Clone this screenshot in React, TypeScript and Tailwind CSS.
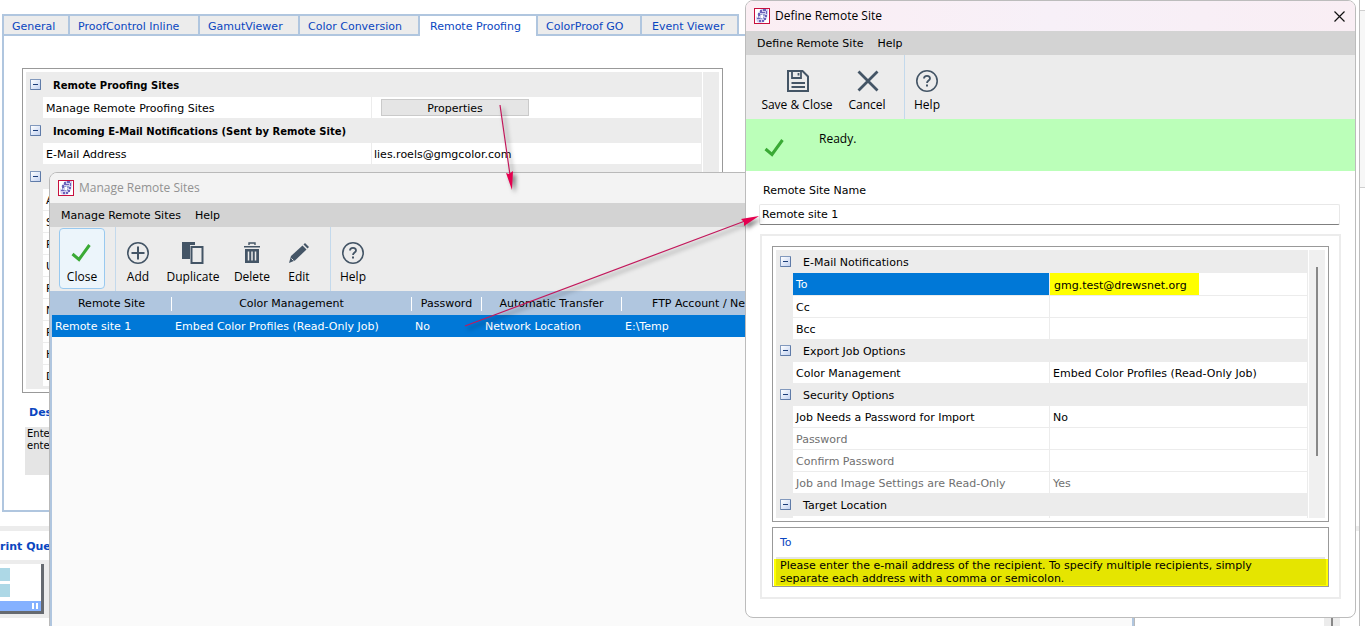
import type { ReactNode } from "react";

const DEJAVU = "font-['DejaVu_Sans',sans-serif]";
const SEGOE = "font-['Open_Sans','Noto_Sans',sans-serif]";

function Logo() {
  return (
    <svg width="16" height="16" viewBox="0 0 16 16" aria-hidden="true" className="shrink-0">
      <rect x="0.5" y="0.5" width="15" height="15" fill="#fff" stroke="#c8103e" />
      <path d="M7 1H14L14 5L13 10L10 14L6 15L3 14L2 10L4 5Z" fill="#cfcdee" />
      <path d="M6 2h2v3H6zM9 1h3v2H9zM12 3h1v3h-1zM4 5h2v3H4zM8 4h3v1H8zM11 7h2v2h-2zM3 10h3v1H3zM5 12h2v2H5zM8 12h2v2H8zM10 10h2v2h-2z" fill="#6a62ba" />
      <path d="M7 7h2v3H7zM3 7h1v2H3zM12 12h2v2h-2z" fill="#fff" />
      <path d="M9 6h2v2H9zM6 10h2v1H6zM9 9h1v2H9zM6 6h2v1H6zM4 8h1v2H4z" fill="#95a2cf" />
    </svg>
  );
}

function Svg({ children }: { children: ReactNode }) {
  return (
    <svg width="24" height="24" viewBox="0 0 24 24" fill="none" stroke="#445566" strokeWidth="2" aria-hidden="true">
      {children}
    </svg>
  );
}

const CheckIcon = () => (
  <Svg>
    <path d="M2.500 13 L9 18.500 L19.500 4" stroke="#3aaa35" strokeWidth="3" />
  </Svg>
);
const AddIcon = () => (
  <Svg>
    <circle cx="12" cy="12" r="10.2" strokeWidth="1.6" />
    <path d="M12 5.5v13M5.5 12h13" />
  </Svg>
);
const DuplicateIcon = () => (
  <Svg>
    <path d="M1 1h13v3H9v14H1z" fill="#445566" stroke="none" />
    <rect x="10.500" y="6" width="11" height="16" fill="#ececec" />
  </Svg>
);
const DeleteIcon = () => (
  <Svg>
    <path d="M9 4V2h6v2" strokeWidth="1.4" />
    <path d="M4 5.8h16" strokeWidth="1.6" />
    <path d="M5 8h14v14H5z" fill="#445566" stroke="none" />
    <path d="M8.500 10.500v9M12 10.500v9M15.500 10.500v9" stroke="#ececec" strokeWidth="1.500" />
  </Svg>
);
const EditIcon = () => (
  <Svg>
    <path d="M2 22 L4 15 L15.500 4.500 L19.500 8.500 L8 19.500 Z" fill="#445566" stroke="none" />
    <path d="M16.500 3.500 L18 2 L22 6 L20.500 7.500 Z" fill="#445566" stroke="none" />
    <path d="M4.500 17.500 L6.500 19.500" stroke="#ececec" strokeWidth="1" />
  </Svg>
);
const HelpIcon = () => (
  <Svg>
    <circle cx="12" cy="12" r="10.2" strokeWidth="1.6" />
    <path d="M9 9.500C9 7.500 10.300 6.800 12 6.800S15 7.700 15 9.400C15 11.500 12 11.500 12 14" strokeWidth="1.800" />
    <path d="M12 15.500v2" />
  </Svg>
);
const SaveIcon = () => (
  <Svg>
    <path d="M3 2h14.500L23 7.500V22H3z" />
    <path d="M7 2v7h9V2M13.500 4v2.500M6.500 14h13.500M6.500 18h13.500" strokeWidth="1.800" />
  </Svg>
);
const CancelIcon = () => (
  <Svg>
    <path d="M3.500 2.500l19 19M22.500 2.500l-19 19" strokeWidth="2.800" />
  </Svg>
);

function ToolButton({ label, width, icon, active }: { label: string; width: string; icon: ReactNode; active?: boolean }) {
  const look = active ? "rounded-sm border border-[#99c9ef] bg-[#ecf5fb]" : "border border-transparent";
  return (
    <button type="button" className={`${SEGOE} ${width} ${look} mt-px flex h-[61px] flex-col items-center gap-1 whitespace-nowrap pt-3 text-[12px] leading-4`}>
      {icon}
      {label}
    </button>
  );
}

function Divider() {
  return <div className="w-px self-stretch bg-[#c3d9ec]" />;
}

function Toggle() {
  return (
    <button
      type="button"
      aria-label="Collapse"
      className="ml-1 flex size-[11px] items-center justify-center rounded-[1px] border border-[#8299bd] border-r-[#5f7ba8] border-b-[#5f7ba8] bg-linear-to-br from-white to-[#c3d2f0]"
    >
      <span className="h-px w-[5px] bg-[#1e3f7a]" />
    </button>
  );
}

type Row = { head?: boolean; label: string; value?: ReactNode; muted?: boolean; selected?: boolean };

function GridRow({ row, headClass }: { row: Row; headClass: string }) {
  if (row.head) {
    return (
      <tr className={headClass}>
        <td className="p-0 pb-px align-middle"><Toggle /></td>
        <th colSpan={2} scope="colgroup" className="p-0 pt-px pl-2.5 text-left align-middle">
          {row.label}
        </th>
      </tr>
    );
  }
  const tone = row.muted ? "text-[#707070]" : "";
  const cell = row.selected ? "bg-[#0078d7] text-white" : "bg-white";
  return (
    <tr className={`h-[22px] ${tone}`}>
      <td className="p-0" />
      <td className={`${cell} border-r border-b border-[#ececec] p-0 pt-0.5 pl-[3px] align-middle`}>{row.label}</td>
      <td className="border-r border-b border-[#ececec] bg-white p-0 align-middle">{row.value}</td>
    </tr>
  );
}

const tabs: [string, string][] = [
  ["General", "w-[66px] pl-2"],
  ["ProofControl Inline", "w-[130px] pl-2"],
  ["GamutViewer", "w-[100px] pl-2"],
  ["Color Conversion", "w-[120px] pl-2"],
  ["Remote Proofing", "w-[118px] pl-2.5"],
  ["ColorProof GO", "w-[104px] pl-2"],
  ["Event Viewer", "w-[99px] border-r-2 pl-2.5"],
];

const mainRows: Row[] = [
  { head: true, label: "Remote Proofing Sites" },
  {
    label: "Manage Remote Proofing Sites",
    value: (
      <button type="button" className="mb-px ml-[9px] flex h-[17px] w-[148px] items-center justify-center border border-[#cacaca] bg-[#e5e5e5] pt-1">
        Properties
      </button>
    ),
  },
  { head: true, label: "Incoming E-Mail Notifications (Sent by Remote Site)" },
  { label: "E-Mail Address", value: <div className="pt-0.5 pl-0.5">lies.roels@gmgcolor.com</div> },
  { head: true, label: "" },
  ...["A", "S", "P", "U", "P", "N", "P", "H", "D"].map((label) => ({ label })),
];

const siteRows: Row[] = [
  { head: true, label: "E-Mail Notifications" },
  {
    label: "To",
    selected: true,
    value: (
      <input
        aria-label="To"
        defaultValue="gmg.test@drewsnet.org"
        className="block h-[22px] w-[149px] bg-[#ffff00] pt-0.5 pl-1 outline-none"
      />
    ),
  },
  { label: "Cc" },
  { label: "Bcc" },
  { head: true, label: "Export Job Options" },
  { label: "Color Management", value: <div className="pt-0.5 pl-[3px]">Embed Color Profiles (Read-Only Job)</div> },
  { head: true, label: "Security Options" },
  { label: "Job Needs a Password for Import", value: <div className="pt-0.5 pl-[3px]">No</div> },
  { label: "Password", muted: true },
  { label: "Confirm Password", muted: true },
  { label: "Job and Image Settings are Read-Only", muted: true, value: <div className="pt-0.5 pl-[3px]">Yes</div> },
  { head: true, label: "Target Location" },
  { label: "" },
];

function SettingsPage() {
  return (
    <main className="flex min-h-screen">
      <div className="min-w-0 flex-1 pt-3.5">
        <section className="mr-2 ml-0.5">
          <div role="tablist" className="flex h-[22px]">
            {tabs.map(([name, size], i) => (
              <button
                key={name}
                type="button"
                role="tab"
                aria-selected={i === 4}
                className={`${size} flex shrink-0 items-start whitespace-nowrap border-t-2 border-l-2 border-[#b0c6df] pt-1 leading-[14px] text-[#0a46c0] ${
                  i === 4 ? "bg-white" : "border-b-2 bg-[#ececec]"
                }`}
              >
                {name}
              </button>
            ))}
            <div className="flex-1 border-b-2 border-[#b0c6df]" />
          </div>
          <div className="h-[476px] border-b-2 border-l-2 border-[#b0c6df] pt-8 pl-[18px]">
            <div className="flex h-[325px] w-[701px] gap-px overflow-hidden border border-[#999] p-[3px]">
              <div className="h-[317px] flex-1 overflow-hidden bg-[#ececec] pt-px">
                <table className="w-full table-fixed border-separate border-spacing-0 leading-[14px]">
                  <colgroup><col className="w-[17px]" /><col className="w-[329px]" /><col /></colgroup>
                  <tbody>
                    {mainRows.map((row, i) => <GridRow key={i} row={row} headClass="h-6 text-[10px] font-bold" />)}
                  </tbody>
                </table>
              </div>
              <div className="w-4 bg-[#ececec]" />
            </div>
            <h2 className="mt-3 pl-[7px] text-[11px] leading-4 font-bold text-[#0a46c0]">Description</h2>
            <p className="mt-1.5 ml-[3px] h-12 w-[690px] bg-[#e5e5e5] pt-px pl-0.5 text-[10px] leading-3">
              Enter<br />enter
            </p>
          </div>
        </section>
        <section className="mt-3.5 border-t-[5px] border-[#ececec]">
          <h2 className="-ml-2 pt-2 text-[11px] leading-4 font-bold text-[#0a46c0]">Print Queue</h2>
          <div className="mt-[5px] mr-2 flex h-[58px] bg-[#ececec] pt-1">
            <div className="h-[50px] w-11 border-r-[3px] border-b-[3px] border-[#666a70] bg-white">
              <div className="flex h-[37px] flex-col gap-[3px] pt-1">
                <div className="h-[13px] w-2.5 bg-[#add8e6]" />
                <div className="h-[13px] w-2.5 bg-[#add8e6]" />
              </div>
              <div className="flex h-2.5 items-center justify-end gap-0.5 bg-[#85b1ff] pr-[3px]">
                <span className="h-1.5 w-0.5 bg-white" />
                <span className="h-1.5 w-0.5 bg-white" />
              </div>
            </div>
          </div>
          <div className="mr-[19px] flex justify-end">
            <div className="flex h-2 w-4 justify-center bg-[#ececec]">
              <div className="w-0.5 bg-[#888]" />
            </div>
          </div>
        </section>
      </div>
      <aside className="w-1.5 border-l border-[#bdbdbd] pt-2.5">
        <div className="h-[178px] border-y border-[#cfcfcf] bg-[#f7f7f7]" />
      </aside>
    </main>
  );
}

const siteColumns: [string, string][] = [
  ["Remote Site", "Remote site 1"],
  ["Color Management", "Embed Color Profiles (Read-Only Job)"],
  ["Password", "No"],
  ["Automatic Transfer", "Network Location"],
  ["FTP Account / Network", "E:\\Temp"],
];

function ManageSites() {
  return (
    <section aria-label="Manage Remote Sites" className="absolute top-[172px] right-[230px] -bottom-px left-[49px] flex flex-col overflow-hidden rounded-t-lg border border-[#b9b9b9] bg-[#fafafa]">
      <header className={`${SEGOE} flex h-[30px] items-center gap-[5px] bg-[#f3f3f3] pl-2 text-[12px] text-[#929292]`}>
        <Logo />
        Manage Remote Sites
      </header>
      <nav className="flex h-6 items-center gap-3.5 bg-[#d3d3d3] pt-0.5 pl-[11px]">
        <button type="button">Manage Remote Sites</button>
        <button type="button">Help</button>
      </nav>
      <div className="flex h-16 bg-[#ececec] pl-[9px]">
        <ToolButton label="Close" width="w-[46px]" icon={<CheckIcon />} active />
        <div className="ml-2.5 flex"><Divider /></div>
        <ToolButton label="Add" width="w-11" icon={<AddIcon />} />
        <ToolButton label="Duplicate" width="w-[66px]" icon={<DuplicateIcon />} />
        <ToolButton label="Delete" width="w-[52px]" icon={<DeleteIcon />} />
        <ToolButton label="Edit" width="w-[42px]" icon={<EditIcon />} />
        <div className="ml-2.5 flex"><Divider /></div>
        <ToolButton label="Help" width="w-11" icon={<HelpIcon />} />
      </div>
      <div className="flex-1 border-x-2 border-[#b0c6df]">
        <table className="w-full table-fixed border-separate border-spacing-0 leading-[14px]">
          <colgroup>
            <col className="w-[120px]" /><col className="w-[240px]" /><col className="w-[70px]" /><col className="w-[140px]" /><col />
          </colgroup>
          <thead>
            <tr className="h-6 bg-[#b0c6df]">
              {siteColumns.map(([name], i) => (
                <th key={name} scope="col" className="overflow-hidden p-0 pt-0.5 font-normal whitespace-nowrap">
                  <div className={i === 4 ? "pl-[30px] text-left" : "border-r border-white"}>{name}</div>
                </th>
              ))}
            </tr>
          </thead>
          <tbody>
            <tr className="h-[22px] bg-[#0078d7] text-white">
              {siteColumns.map(([name, value]) => (
                <td key={name} className="p-0 pt-0.5 pl-[3px] whitespace-nowrap">{value}</td>
              ))}
            </tr>
          </tbody>
        </table>
      </div>
    </section>
  );
}

function DefineSite() {
  return (
    <section aria-label="Define Remote Site" className="absolute top-0 right-[9px] left-[745px] overflow-hidden rounded-lg border border-[#bcbcbc] bg-white pb-[18px]">
      <header className={`${SEGOE} flex h-[30px] items-center gap-[5px] bg-linear-to-r from-[#fbeef3] via-[#f7f0f8] to-[#f9eef4] pr-2.5 pl-2 text-[12px]`}>
        <Logo />
        <span className="flex-1">Define Remote Site</span>
        <button type="button" aria-label="Close window">
          <svg width="11" height="11" viewBox="0 0 11 11" stroke="#111" strokeWidth="1.200"><path d="M.5.5l10 10M10.500.5l-10 10" /></svg>
        </button>
      </header>
      <nav className="flex h-6 items-center gap-3.5 bg-[#d3d3d3] pt-0.5 pl-[11px]">
        <button type="button">Define Remote Site</button>
        <button type="button">Help</button>
      </nav>
      <div className="flex h-16 bg-[#ececec] pl-[9px]">
        <ToolButton label="Save &amp; Close" width="w-[84px]" icon={<SaveIcon />} />
        <ToolButton label="Cancel" width="w-14" icon={<CancelIcon />} />
        <div className="ml-[9px] flex"><Divider /></div>
        <ToolButton label="Help" width="w-11" icon={<HelpIcon />} />
      </div>
      <div className={`${SEGOE} flex h-[52px] items-start gap-8 bg-[#bbffb9] pl-[17px] text-[12px]`}>
        <div className="pt-[17px]"><CheckIcon /></div>
        <p className="pt-3 leading-4">Ready.</p>
      </div>
      <label htmlFor="site-name" className="block pt-[13px] pl-[17px] leading-[14px]">Remote Site Name</label>
      <div className="mt-1.5 mr-[15px] ml-[13px]">
        <input
          id="site-name"
          defaultValue="Remote site 1"
          className="block h-[21px] w-full rounded-xs border border-[#e8e8e8] border-b-[#7f7f7f] pl-0.5 outline-none"
        />
      </div>
      <div className="mt-[9px] mr-3.5 ml-3.5 border-2 border-[#ececec] p-2.5">
        <div className="flex h-[276px] gap-px border border-[#999] p-[3px]">
          <div className="h-[268px] flex-1 overflow-hidden bg-[#ececec] pt-px">
            <table className="w-full table-fixed border-separate border-spacing-0 leading-[14px]">
              <colgroup><col className="w-[17px]" /><col className="w-[257px]" /><col /></colgroup>
              <tbody>
                {siteRows.map((row, i) => <GridRow key={i} row={row} headClass="h-[22px] [&>th]:font-normal" />)}
              </tbody>
            </table>
          </div>
          <div className="flex w-4 justify-center bg-[#f0f0f0] pt-[17px]">
            <div className="h-[189px] w-0.5 bg-[#888]" />
          </div>
        </div>
        <div className="mt-[5px] border border-[#999]">
          <h3 className="h-[29px] pt-2 pl-[7px] leading-[14px] text-[#0a46c0]">To</h3>
          <div className="mx-[3px] h-0.5 bg-[#e5e5e5]" />
          <div className="ml-px bg-[#ffff00] pr-0.5 pb-px pl-0.5">
            <p className="bg-[#e5e500] pl-1 leading-[13px]">
              Please enter the e-mail address of the recipient. To specify multiple recipients, simply<br />
              separate each address with a comma or semicolon.
            </p>
          </div>
        </div>
      </div>
    </section>
  );
}

function Arrows() {
  return (
    <svg className="pointer-events-none absolute top-0 left-0 drop-shadow-[3px_3px_2px_rgba(0,0,0,0.5)]" width="780" height="350" aria-hidden="true">
      <path d="M500 105L510 175M465 326L745 221" stroke="#c2185b" strokeWidth="1.200" />
      <path d="M512 190L506 173L509 174L513 171Z M759 216L741 219L744 222L744 226Z" fill="#e5004f" />
    </svg>
  );
}

export default function App() {
  return (
    <div className={`${DEJAVU} relative min-h-screen overflow-hidden bg-white text-[11px] text-black`}>
      <SettingsPage />
      <ManageSites />
      <DefineSite />
      <Arrows />
    </div>
  );
}
